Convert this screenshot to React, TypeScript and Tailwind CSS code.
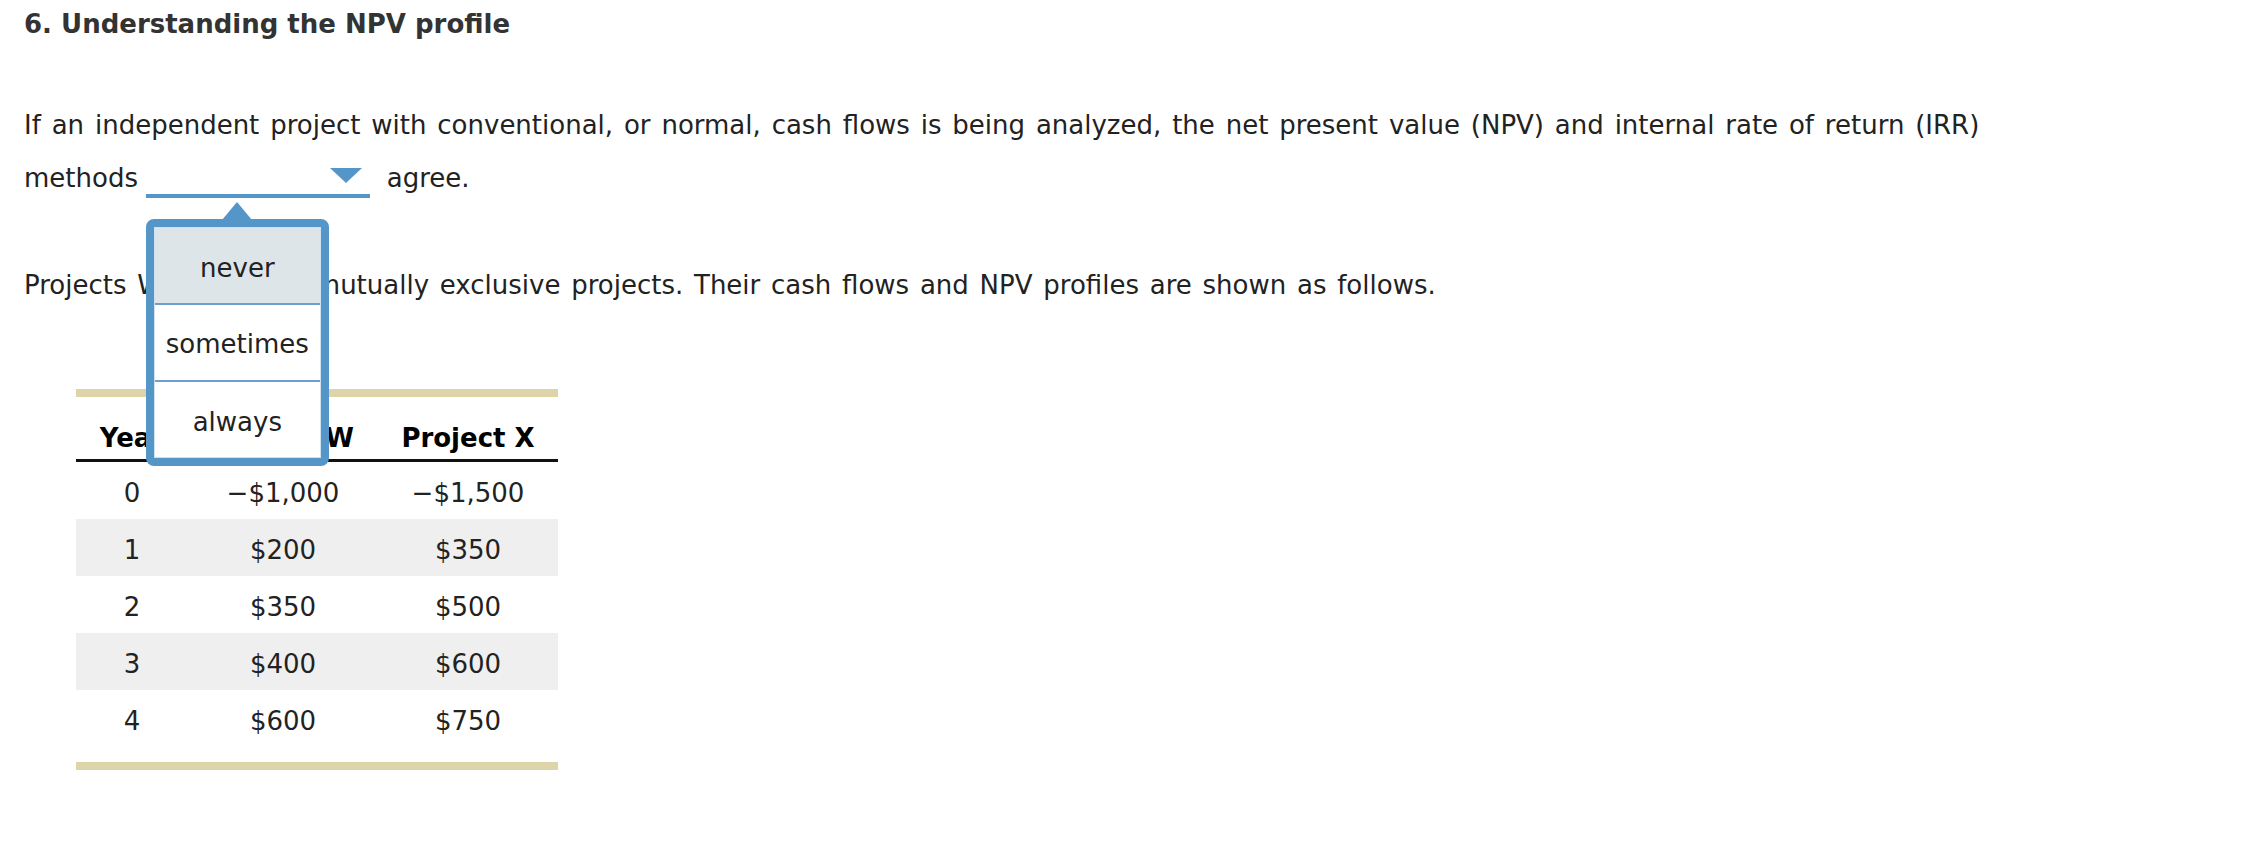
import React from "react";

const rows = [
  ["0", "\u2212$1,000", "\u2212$1,500"],
  ["1", "$200", "$350"],
  ["2", "$350", "$500"],
  ["3", "$400", "$600"],
  ["4", "$600", "$750"],
];

function Dropdown() {
  return (
    <span className="relative ml-[-3px] inline-block w-[224px] h-[40px] align-[-11px] border-b-4 border-[#5596c8] mr-[6px] [word-spacing:0px]">
      <svg
        className="absolute right-[8px] top-[10px]"
        width="32"
        height="15"
        viewBox="0 0 32 15"
      >
        <polygon points="0,0 32,0 16,15" fill="#5596c8" />
      </svg>
      <span className="absolute left-0 top-[61px] z-10 block w-[183px] leading-normal">
        <svg
          className="absolute left-[76px] top-[-17px]"
          width="30"
          height="18"
          viewBox="0 0 30 18"
        >
          <polygon points="15,0 30,18 0,18" fill="#5596c8" />
        </svg>
        <span className="block rounded-[8px] border-[8px] border-[#5596c8] bg-white">
          <span className="block border border-[#cfe0ee]">
            <span className="flex h-[75px] items-center justify-center bg-[#dde5e8] pt-[6px] text-[26px] text-[#222]">
              never
            </span>
            <span className="flex h-[77px] items-center justify-center border-t-2 border-[#6a9fd0] bg-white pt-[4px] text-[26px] text-[#222]">
              sometimes
            </span>
            <span className="flex h-[77px] items-center justify-center border-t-2 border-[#6a9fd0] bg-white pt-[6px] text-[26px] text-[#222]">
              always
            </span>
          </span>
        </span>
      </span>
    </span>
  );
}

export default function App() {
  return (
    <div className="min-h-[841px] w-full bg-white pl-[24px] pt-[6px] font-['DejaVu_Sans',sans-serif] text-[#222]">
      <h2 className="text-[26px] leading-[36px] font-bold text-[#333]">
        6. Understanding the NPV profile
      </h2>
      <p className="mt-[57px] text-[26px] leading-[53px] [word-spacing:2.6px]">
        If an independent project with conventional, or normal, cash flows is
        being analyzed, the net present value (NPV) and internal rate of return
        (IRR)
        <br />
        methods <Dropdown /> agree.
      </p>
      <p className="mt-[54px] text-[26px] leading-[53px] [word-spacing:2.5px]">
        Projects W and X are mutually exclusive projects. Their cash flows and
        NPV profiles are shown as follows.
      </p>
      <div className="ml-[52px] mt-[77px] w-[482px]">
        <div className="h-[8px] bg-[#ddd4a9]" />
        <div className="grid h-[65px] grid-cols-[112px_190px_180px] items-end border-b-[3px] border-[#111] pb-[6px] text-center text-[26px] leading-[30px] font-bold text-black">
          <div>Year</div>
          <div>Project W</div>
          <div>Project X</div>
        </div>
        {rows.map((r, i) => (
          <div
            key={i}
            className={
              "grid h-[57px] grid-cols-[112px_190px_180px] pt-[6px] text-center text-[26px] leading-[51px] " +
              (i % 2 === 1 ? "bg-[#efefef]" : "bg-white")
            }
          >
            <div>{r[0]}</div>
            <div>{r[1]}</div>
            <div>{r[2]}</div>
          </div>
        ))}
        <div className="h-[15px]" />
        <div className="h-[8px] bg-[#ddd4a9]" />
      </div>
    </div>
  );
}
